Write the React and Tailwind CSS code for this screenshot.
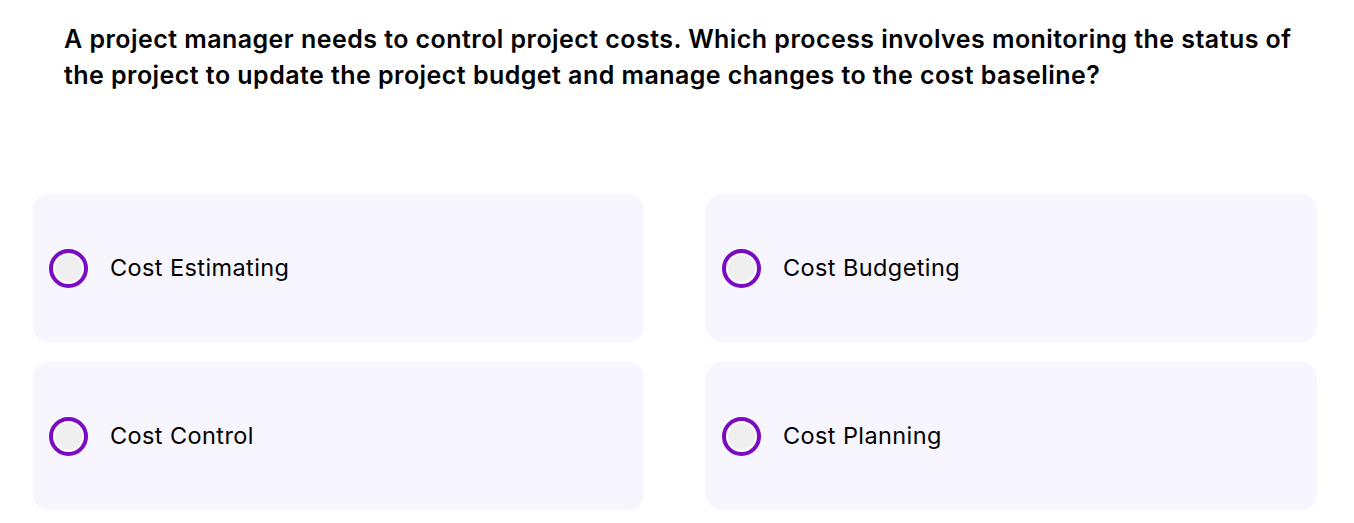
import { useState } from "react"

const options = ["Cost Estimating", "Cost Budgeting", "Cost Control", "Cost Planning"]

const App = () => {
  const [selected, setSelected] = useState(null)

  return (
    <div className="min-h-screen bg-white font-['Inter',sans-serif] text-black">
      <div className="pl-16 pr-12 pt-[21px]">
        <h1 className="text-[25px] leading-[36px] font-semibold tracking-[0.45px]">
          A project manager needs to control project costs. Which process involves monitoring the status of the project to
          update the project budget and manage changes to the cost baseline?
        </h1>
      </div>

      <div className="grid grid-cols-2 gap-x-[62px] gap-y-5 pl-[33px] pr-[37px] mt-[101px]">
        {options.map((opt) => (
          <button
            key={opt}
            onClick={() => setSelected(opt)}
            className="h-[148px] rounded-2xl bg-[#f7f5fe] flex items-center pl-4 text-left"
          >
            <span className="w-[39px] h-[39px] rounded-full border-4 border-[#7a0bc0] bg-white p-[2px] flex items-center justify-center shrink-0">
              <span className={`w-full h-full rounded-full ${selected === opt ? "bg-[#7a0bc0]" : "bg-[#efefef]"}`}></span>
            </span>
            <span className="ml-[22px] text-[23.5px] leading-none tracking-[0.4px]">{opt}</span>
          </button>
        ))}
      </div>
    </div>
  )
}

export default App
